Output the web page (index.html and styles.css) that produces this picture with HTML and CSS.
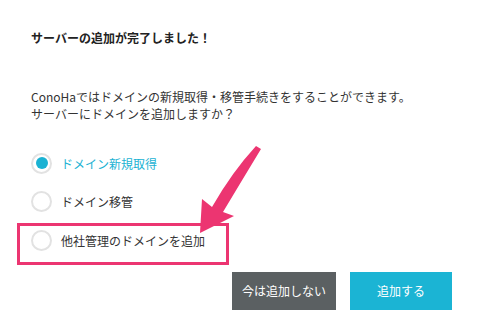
FILE: index.html
```html
<!DOCTYPE html>
<html lang="ja">
<head>
<meta charset="utf-8">
<link rel="stylesheet" href="styles.css">
</head>
<body>
<div class="dialog">
  <h1 class="title">サーバーの追加が完了しました！</h1>
  <p class="lead">ConoHaではドメインの新規取得・移管手続きをすることができます。<br>サーバーにドメインを追加しますか？</p>
  <div class="options">
    <label class="option checked"><span class="radio"></span><span class="label">ドメイン新規取得</span></label>
    <label class="option"><span class="radio"></span><span class="label">ドメイン移管</span></label>
    <label class="option"><span class="radio"></span><span class="label">他社管理のドメインを追加</span></label>
  </div>
  <div class="actions">
    <button class="btn btn-gray">今は追加しない</button>
    <button class="btn btn-blue">追加する</button>
  </div>
  <div class="highlight"></div>
  <svg class="arrow" width="478" height="330" viewBox="0 0 478 330">
    <path d="M256,146 L261,149 Q241,182 223,212 L234,216 L200,233 L202,199 L212,207 Q232,172 256,146 Z" fill="#ec3571"/>
  </svg>
</div>
</body>
</html>
```
FILE: styles.css
```css
html, body {
  margin: 0;
  padding: 0;
  background: #fff;
}
.dialog {
  position: relative;
  width: 478px;
  height: 330px;
  box-sizing: border-box;
  padding: 29px 0 0 31px;
  font-family: "Noto Sans CJK JP", "Noto Sans", sans-serif;
  color: #333;
}
.title {
  margin: 0;
  font-size: 12px;
  line-height: 18px;
  font-weight: bold;
  color: #222;
}
.lead {
  margin: 41px 0 0;
  font-size: 12px;
  line-height: 17px;
}
.options {
  margin-top: 22px;
  display: flex;
  flex-direction: column;
}
.option {
  display: flex;
  align-items: center;
  height: 38.5px;
  gap: 9px;
  font-size: 12px;
}
.radio {
  width: 17px;
  height: 17px;
  border: 2px solid #e2e2e2;
  border-radius: 50%;
  display: flex;
  align-items: center;
  justify-content: center;
  background: #fff;
}
.checked .radio::after {
  content: "";
  width: 12px;
  height: 12px;
  border-radius: 50%;
  background: #1ab2d3;
}
.checked .label {
  color: #1ab2d3;
}
.actions {
  margin-top: 12px;
  display: flex;
  gap: 14px;
  padding-left: 201px;
}
.btn {
  border: none;
  height: 38px;
  font-family: inherit;
  font-size: 12px;
  color: #fff;
  padding: 0;
}
.btn-gray {
  width: 104px;
  background: #5b6062;
}
.btn-blue {
  width: 102px;
  background: #1bb4d4;
}
.highlight {
  position: absolute;
  left: 17px;
  top: 223px;
  width: 206px;
  height: 36px;
  border: 3px solid #ec3571;
}
.arrow {
  position: absolute;
  left: 0;
  top: 0;
}
```
